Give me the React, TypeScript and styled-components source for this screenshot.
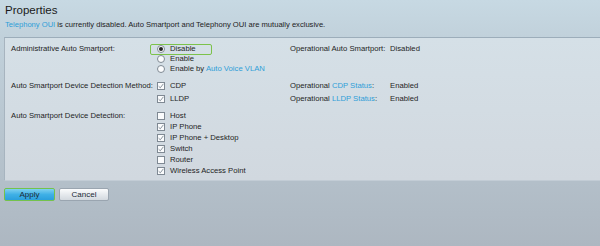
import styled, { createGlobalStyle } from "styled-components";

const GlobalStyle = createGlobalStyle`
  html, body {
    margin: 0;
    height: 100%;
  }
  body {
    background: linear-gradient(#c7d9e3 0, #c1d1db 37px, #b3bfc9 182px, #adb7c1 100%);
    font-family: "Liberation Sans", Arial, sans-serif;
    color: #1e1e1e;
    overflow: hidden;
  }
`;

const Header = styled.header`
  padding: 3px 0 0 5px;
  height: 34px;
`;

const Title = styled.h1`
  margin: 0;
  font-size: 11.5px;
  font-weight: normal;
  line-height: 14px;
  color: #1a1a1a;
`;

const Note = styled.p`
  margin: 3px 0 0;
  font-size: 7.6px;
  line-height: 10px;
  color: #222;
`;

const Link = styled.span`
  color: #2f9ed8;
`;

const Panel = styled.section`
  margin-left: 4px;
  border-top: 1px solid #9cadba;
  border-left: 1px solid #a7b4bf;
  border-bottom: 1px solid #c2ccd5;
  background: linear-gradient(#d5e0e7, #d1d8df);
  padding: 6px 0 4px 6px;
  height: 132px;
  box-sizing: content-box;
`;

const Row = styled.div<{ $gap: number }>`
  display: grid;
  grid-template-columns: 146px 133px 100px 1fr;
  margin-top: ${(p) => p.$gap}px;
  font-size: 7.7px;
  white-space: nowrap;
`;

const Label = styled.div<{ $h: number }>`
  line-height: ${(p) => p.$h}px;
`;

const Options = styled.div`
  display: flex;
  flex-direction: column;
`;

const Option = styled.label<{ $h: number; $mark?: boolean }>`
  position: relative;
  display: flex;
  align-items: center;
  gap: 5px;
  height: ${(p) => p.$h}px;
  line-height: ${(p) => p.$h}px;
  ${(p) =>
    p.$mark &&
    `
    &::before {
      content: "";
      position: absolute;
      left: -7px;
      top: 0;
      width: 60px;
      height: 8.5px;
      border: 1.5px solid #7cc24b;
      border-radius: 2px;
    }
  `}
`;

const Radio = styled.span<{ $on?: boolean }>`
  box-sizing: border-box;
  width: 8px;
  height: 8px;
  border-radius: 50%;
  border: 1px solid #7f8993;
  background: #fbfcfd;
  display: flex;
  align-items: center;
  justify-content: center;
  &::after {
    content: "";
    width: 4px;
    height: 4px;
    border-radius: 50%;
    background: ${(p) => (p.$on ? "#222" : "transparent")};
  }
`;

const Box = styled.span`
  box-sizing: border-box;
  width: 8px;
  height: 8px;
  border: 1px solid #7f8993;
  background: #fbfcfd;
  display: flex;
  align-items: center;
  justify-content: center;
`;

const Check = () => (
  <svg width="6" height="6" viewBox="0 0 6 6">
    <path d="M0.6 3.2 L2.3 4.8 L5.4 0.8" fill="none" stroke="#7d8892" strokeWidth="0.9" />
  </svg>
);

const CheckBox = ({ on }: { on: boolean }) => <Box>{on && <Check />}</Box>;

const Actions = styled.div`
  display: flex;
  gap: 4px;
  margin: 7px 0 0 4px;
`;

const Button = styled.button<{ $primary?: boolean }>`
  box-sizing: border-box;
  height: 13px;
  padding: 0;
  font-family: "Liberation Sans", Arial, sans-serif;
  font-size: 8px;
  color: #1c2a36;
  border-radius: 2px;
  width: ${(p) => (p.$primary ? 51 : 50)}px;
  border: ${(p) => (p.$primary ? "1.5px solid #74c24c" : "1px solid #9aa5b0")};
  background: ${(p) =>
    p.$primary
      ? "linear-gradient(#7fd0f0, #3fb0e6 50%, #2b9fdc)"
      : "linear-gradient(#fbfcfd, #e4e8ec 55%, #d3d9df)"};
`;

const devices: [string, boolean][] = [
  ["Host", false],
  ["IP Phone", true],
  ["IP Phone + Desktop", true],
  ["Switch", true],
  ["Router", false],
  ["Wireless Access Point", true],
];

export default function App() {
  return (
    <>
      <GlobalStyle />
      <Header>
        <Title>Properties</Title>
        <Note>
          <Link>Telephony OUI</Link> is currently disabled. Auto Smartport and Telephony OUI are
          mutually exclusive.
        </Note>
      </Header>
      <Panel>
        <Row $gap={0}>
          <Label $h={10}>Administrative Auto Smartport:</Label>
          <Options>
            <Option $h={10} $mark>
              <Radio $on />
              Disable
            </Option>
            <Option $h={10}>
              <Radio />
              Enable
            </Option>
            <Option $h={10}>
              <Radio />
              <span>
                Enable by <Link>Auto Voice VLAN</Link>
              </span>
            </Option>
          </Options>
          <Label $h={10}>Operational Auto Smartport:</Label>
          <Label $h={10}>Disabled</Label>
        </Row>
        <Row $gap={5}>
          <Label $h={13}>Auto Smartport Device Detection Method:</Label>
          <Option $h={13}>
            <CheckBox on />
            CDP
          </Option>
          <Label $h={13}>
            Operational <Link>CDP Status</Link>:
          </Label>
          <Label $h={13}>Enabled</Label>
        </Row>
        <Row $gap={0}>
          <Label $h={13} />
          <Option $h={13}>
            <CheckBox on />
            LLDP
          </Option>
          <Label $h={13}>
            Operational <Link>LLDP Status</Link>:
          </Label>
          <Label $h={13}>Enabled</Label>
        </Row>
        <Row $gap={5}>
          <Label $h={11}>Auto Smartport Device Detection:</Label>
          <Options>
            {devices.map(([name, on]) => (
              <Option key={name} $h={11}>
                <CheckBox on={on} />
                {name}
              </Option>
            ))}
          </Options>
        </Row>
      </Panel>
      <Actions>
        <Button $primary>Apply</Button>
        <Button>Cancel</Button>
      </Actions>
    </>
  );
}
